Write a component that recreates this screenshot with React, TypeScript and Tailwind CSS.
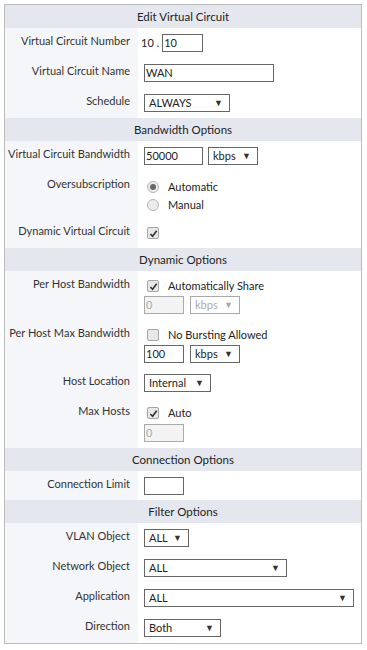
import React from "react";

const font = { fontFamily: "Lato, 'Liberation Sans', sans-serif" };

function Header({ title }: { title: string }) {
    return (
        <div className="flex h-[23px] items-center justify-center bg-[#e4e8ee] text-[11.5px] text-[#222]">
            {title}
        </div>
    );
}

function Row({ label, children, className = "pt-[6px] pb-[6px]" }: { label: string; children: React.ReactNode; className?: string }) {
    return (
        <div className="flex">
            <div className="w-[133px] shrink-0 whitespace-nowrap bg-[#f4f6f9] pr-[8px] pt-[5px] text-right text-[11px] leading-[16px] text-[#333]">
                {label}
            </div>
            <div className={`flex-1 pl-[6px] ${className}`}>{children}</div>
        </div>
    );
}

function TextBox({ value = "", width, disabled }: { value?: string; width: string; disabled?: boolean }) {
    return (
        <div
            className={`flex h-[18px] items-center pl-[1px] text-[11px] ${width} ${
                disabled ? "border border-[#aaa] bg-[#f3f3f3] text-[#aaa]" : "border border-[#666] bg-white text-[#222]"
            }`}
        >
            {value}
        </div>
    );
}

function Select({ value, width, disabled }: { value: string; width: string; disabled?: boolean }) {
    return (
        <div
            className={`flex h-[18px] items-center justify-between pl-[4px] pr-[6px] text-[11px] ${width} ${
                disabled ? "border border-[#aaa] text-[#aaa]" : "border border-[#666] text-[#222]"
            }`}
        >
            <span>{value}</span>
            <span className={`text-[9px] ${disabled ? "text-[#aaa]" : "text-[#333]"}`}>▼</span>
        </div>
    );
}

function Check({ checked, label }: { checked?: boolean; label?: string }) {
    return (
        <div className="flex h-[18px] items-center gap-[9px] pl-[3px] text-[11px] text-[#222]">
            <span className="flex h-[12px] w-[12px] items-center justify-center rounded-[2px] border border-[#a5a5a5] bg-[#e8e8e8]">
                {checked && (
                    <svg width="9" height="9" viewBox="0 0 10 10">
                        <path d="M1.5 5.5 L4 8 L8.5 2" fill="none" stroke="#333" strokeWidth="1.8" />
                    </svg>
                )}
            </span>
            {label && <span>{label}</span>}
        </div>
    );
}

function Radio({ checked, label }: { checked?: boolean; label: string }) {
    return (
        <div className="flex h-[18px] items-center gap-[9px] pl-[3px] text-[11px] text-[#222]">
            <span className="flex h-[12px] w-[12px] items-center justify-center rounded-full border border-[#b5b5b5] bg-[#ececec]">
                {checked && <span className="h-[6px] w-[6px] rounded-full bg-[#666]" />}
            </span>
            <span>{label}</span>
        </div>
    );
}

export default function App() {
    return (
        <div className="bg-white p-[4px]" style={font}>
            <div className="w-[358px] border border-[#bbb]">
                <Header title="Edit Virtual Circuit" />
                <Row label="Virtual Circuit Number">
                    <div className="flex items-center">
                        <span className="-ml-[3px] mr-[3px] whitespace-nowrap text-[11px] text-[#222]">10 .</span>
                        <TextBox value="10" width="w-[41px]" />
                    </div>
                </Row>
                <Row label="Virtual Circuit Name">
                    <TextBox value="WAN" width="w-[130px]" />
                </Row>
                <Row label="Schedule">
                    <Select value="ALWAYS" width="w-[86px]" />
                </Row>

                <Header title="Bandwidth Options" />
                <Row label="Virtual Circuit Bandwidth">
                    <div className="flex gap-[5px]">
                        <TextBox value="50000" width="w-[59px]" />
                        <Select value="kbps" width="w-[50px]" />
                    </div>
                </Row>
                <Row label="Oversubscription" className="pt-[7px] pb-[4px]">
                    <Radio checked label="Automatic" />
                    <Radio label="Manual" />
                </Row>
                <Row label="Dynamic Virtual Circuit">
                    <Check checked />
                </Row>

                <Header title="Dynamic Options" />
                <Row label="Per Host Bandwidth">
                    <Check checked label="Automatically Share" />
                    <div className="mt-[1px] flex gap-[6px]">
                        <TextBox value="0" width="w-[40px]" disabled />
                        <Select value="kbps" width="w-[50px]" disabled />
                    </div>
                </Row>
                <Row label="Per Host Max Bandwidth" className="pt-[6px] pb-[5px]">
                    <Check label="No Bursting Allowed" />
                    <div className="mt-[1px] flex gap-[6px]">
                        <TextBox value="100" width="w-[40px]" />
                        <Select value="kbps" width="w-[50px]" />
                    </div>
                </Row>
                <Row label="Host Location">
                    <Select value="Internal" width="w-[67px]" />
                </Row>
                <Row label="Max Hosts">
                    <Check checked label="Auto" />
                    <div className="mt-[2px]">
                        <TextBox value="0" width="w-[40px]" disabled />
                    </div>
                </Row>

                <Header title="Connection Options" />
                <Row label="Connection Limit" className="pt-[6px] pb-[5px]">
                    <TextBox width="w-[40px]" />
                </Row>

                <Header title="Filter Options" />
                <Row label="VLAN Object">
                    <Select value="ALL" width="w-[45px]" />
                </Row>
                <Row label="Network Object">
                    <Select value="ALL" width="w-[143px]" />
                </Row>
                <Row label="Application">
                    <Select value="ALL" width="w-[210px]" />
                </Row>
                <Row label="Direction">
                    <Select value="Both" width="w-[77px]" />
                </Row>
            </div>
        </div>
    );
}
